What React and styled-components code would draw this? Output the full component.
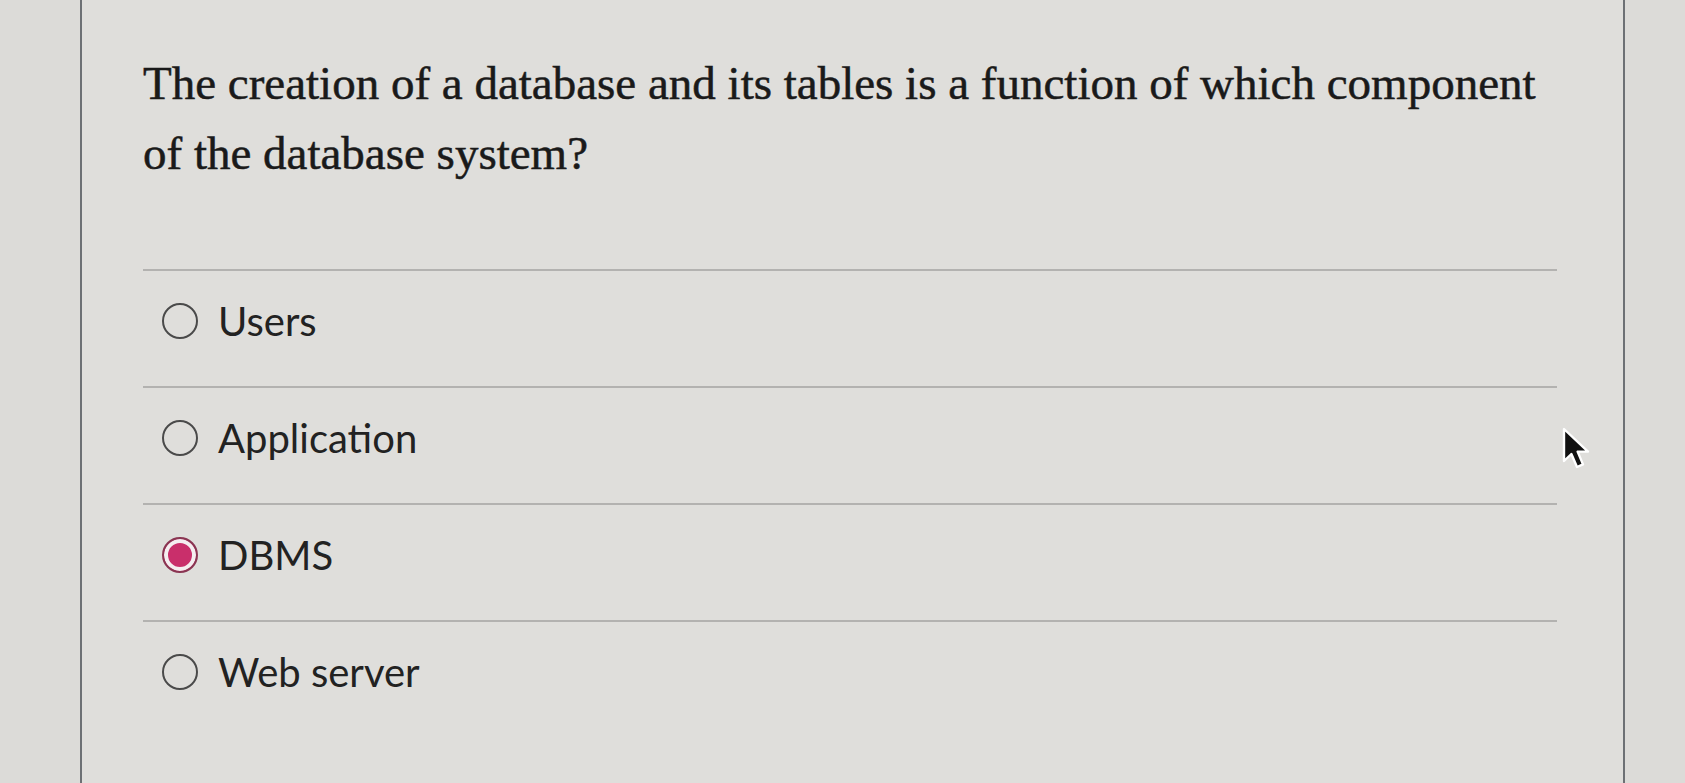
import React from 'react';
import styled, { createGlobalStyle } from 'styled-components';

const GlobalStyle = createGlobalStyle`
  html, body {
    margin: 0;
    padding: 0;
    background: #dcdbd8;
  }
  body {
    font-family: "Lato", "Liberation Sans", sans-serif;
    overflow: hidden;
  }
`;

const Page = styled.div`
  display: flex;
  min-height: 100vh;
  background: #dcdbd8;
`;

const Gutter = styled.div`
  width: ${(p) => p.width}px;
  flex-shrink: 0;
`;

const Panel = styled.div`
  position: relative;
  width: 1545px;
  flex-shrink: 0;
  min-height: 783px;
  box-sizing: border-box;
  border-left: 2px solid #6d7074;
  border-right: 2px solid #6d7074;
  background: #dfdedb;
  padding: 48px 66px 0 61px;
`;

const Question = styled.p`
  margin: 0 0 81px;
  font-family: "Liberation Serif", "Times New Roman", serif;
  font-size: 47px;
  line-height: 70px;
  color: #1a1a1a;
  -webkit-text-stroke: 0.5px #1a1a1a;
`;

const Options = styled.div`
  display: flex;
  flex-direction: column;
`;

const Option = styled.label`
  display: flex;
  align-items: center;
  gap: 20px;
  border-top: 2px solid #b3b2b0;
  padding: 30px 0 45px 19px;
  font-size: 40px;
  line-height: 40px;
  color: #222;
  cursor: pointer;
`;

const Radio = styled.span`
  width: 36px;
  height: 36px;
  box-sizing: border-box;
  border-radius: 50%;
  flex-shrink: 0;
  border: 2.5px solid ${(p) => (p.checked ? '#8a3552' : '#4a4a4a')};
  background: ${(p) => (p.checked ? '#c92f6b' : 'transparent')};
  box-shadow: ${(p) => (p.checked ? 'inset 0 0 0 4px #f4eef0' : 'none')};
`;

const Pointer = styled.svg`
  position: absolute;
  left: 1479px;
  top: 426px;
  width: 30px;
  height: 44px;
  pointer-events: none;
`;

const options = ['Users', 'Application', 'DBMS', 'Web server'];

const App = () => {
  return (
    <>
      <GlobalStyle />
      <Page>
        <Gutter width={80} />
        <Panel>
          <Question>
            The creation of a database and its tables is a function of which component of
            the database system?
          </Question>
          <Options>
            {options.map((o) => (
              <Option key={o}>
                <Radio checked={o === 'DBMS'} />
                {o}
              </Option>
            ))}
          </Options>
          <Pointer viewBox="0 0 15 22">
            <path
              d="M1.5 1.5 L1.5 17.5 L5.2 14 L8 20.5 L11 19.2 L8.3 12.8 L13.5 12.8 Z"
              fill="#111"
              stroke="#fff"
              strokeWidth="1.2"
              strokeLinejoin="round"
            />
          </Pointer>
        </Panel>
        <Gutter width={60} />
      </Page>
    </>
  );
};

export default App;
